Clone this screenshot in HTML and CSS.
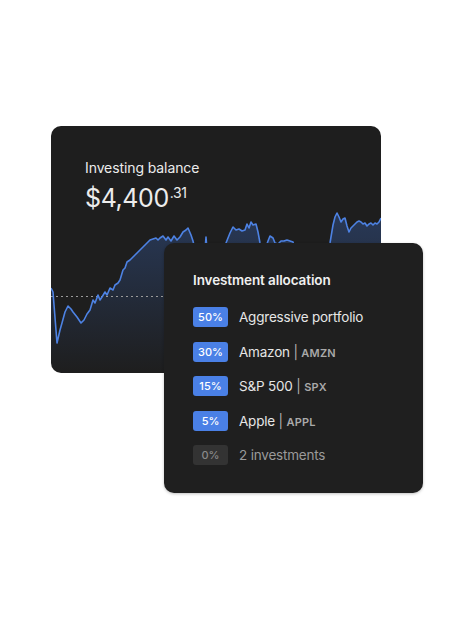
FILE: index.html
```html
<!DOCTYPE html>
<html>
<head>
<meta charset="utf-8">
<link rel="stylesheet" href="styles.css">
</head>
<body>
<div class="stage">
  <section class="balance-card">
    <svg class="chart" viewBox="51 126 330 247" preserveAspectRatio="none" width="330" height="247">
      <defs>
        <linearGradient id="fill" x1="0" y1="210" x2="0" y2="373" gradientUnits="userSpaceOnUse">
          <stop offset="0" stop-color="#3f74d6" stop-opacity="0.32"/>
          <stop offset="1" stop-color="#3f74d6" stop-opacity="0"/>
        </linearGradient>
      </defs>
      <polygon fill="url(#fill)" points="51,288 53,292 57,343 60,330 62,323 65,312 68,306 71,309 73,312 77,317 81,323 84,320 87,314 90,310 93,300 95,303 98,295 100,300 102,297 105,292 107,295 110,288 113,290 115,285 118,283 120,280 123,270 125,268 127,262 130,260 132,258 135,255 138,252 141,249 143,247 146,244 150,240 153,239 156,238 158,240 160,238 163,236 166,240 168,237 171,241 174,236 177,240 180,237 183,232 186,230 188,228 191,235 193,241 195,250 205,250 206,237 207,250 224,250 226,243 230,233 233,227 236,230 239,229 242,231 245,230 247,224 249,228 251,222 253,225 256,224 258,232 260,243 262,250 265,250 268,241 270,236 273,238 275,243 278,244 281,241 284,241 287,240 290,241 293,242 295,250 328,250 330,243 333,225 335,217 337,213 339,217 341,222 343,219 345,218 347,226 349,232 351,228 353,226 355,224 357,222 359,221 361,222 363,224 365,223 367,226 369,224 371,223 373,225 375,223 377,224 379,222 381,218 381,373 51,373"/>
      <line x1="51" y1="296.5" x2="381" y2="296.5" stroke="#9a9a9a" stroke-width="1" stroke-dasharray="2 3"/>
      <polyline fill="none" stroke="#4d82e3" stroke-width="1.6" stroke-linejoin="round" points="51,288 53,292 57,343 60,330 62,323 65,312 68,306 71,309 73,312 77,317 81,323 84,320 87,314 90,310 93,300 95,303 98,295 100,300 102,297 105,292 107,295 110,288 113,290 115,285 118,283 120,280 123,270 125,268 127,262 130,260 132,258 135,255 138,252 141,249 143,247 146,244 150,240 153,239 156,238 158,240 160,238 163,236 166,240 168,237 171,241 174,236 177,240 180,237 183,232 186,230 188,228 191,235 193,241 195,250 205,250 206,237 207,250 224,250 226,243 230,233 233,227 236,230 239,229 242,231 245,230 247,224 249,228 251,222 253,225 256,224 258,232 260,243 262,250 265,250 268,241 270,236 273,238 275,243 278,244 281,241 284,241 287,240 290,241 293,242 295,250 328,250 330,243 333,225 335,217 337,213 339,217 341,222 343,219 345,218 347,226 349,232 351,228 353,226 355,224 357,222 359,221 361,222 363,224 365,223 367,226 369,224 371,223 373,225 375,223 377,224 379,222 381,218"/>
    </svg>
    <div class="balance-head">
      <div class="balance-label">Investing balance</div>
      <div class="balance-amount">$4,400<span class="cents">.31</span></div>
    </div>
  </section>

  <section class="alloc-card">
    <h2 class="alloc-title">Investment allocation</h2>
    <ul class="alloc-list">
      <li class="alloc-row"><span class="badge">50%</span><span class="name">Aggressive portfolio</span></li>
      <li class="alloc-row"><span class="badge">30%</span><span class="name">Amazon <span class="sep">|</span> <span class="ticker">AMZN</span></span></li>
      <li class="alloc-row"><span class="badge">15%</span><span class="name">S&amp;P 500 <span class="sep">|</span> <span class="ticker">SPX</span></span></li>
      <li class="alloc-row"><span class="badge">5%</span><span class="name">Apple <span class="sep">|</span> <span class="ticker">APPL</span></span></li>
      <li class="alloc-row muted"><span class="badge">0%</span><span class="name">2 investments</span></li>
    </ul>
  </section>
</div>
</body>
</html>
```

FILE: styles.css
```css
* { box-sizing: border-box; }
html, body { margin: 0; padding: 0; background: #ffffff; }
body {
  font-family: Inter, "Noto Sans", "Liberation Sans", sans-serif;
  width: 474px;
  height: 620px;
  overflow: hidden;
}
.stage {
  position: relative;
  margin: 126px 0 0 51px;
  width: 372px;
  height: 367px;
}
.balance-card {
  position: relative;
  width: 330px;
  height: 247px;
  background: #1e1e1e;
  border-radius: 10px;
  overflow: hidden;
}
.chart {
  position: absolute;
  left: 0;
  top: 0;
  display: block;
}
.balance-head {
  position: relative;
  padding: 33px 0 0 34px;
  color: #ececec;
}
.balance-label {
  font-size: 14px;
  line-height: 17px;
  font-weight: 400;
  letter-spacing: -0.1px;
}
.balance-amount {
  margin-top: 2px;
  font-size: 25px;
  line-height: 30px;
  font-weight: 400;
  letter-spacing: -0.4px;
}
.cents {
  font-size: 14px;
  vertical-align: 9px;
  margin-left: 1px;
}
.alloc-card {
  position: absolute;
  left: 113px;
  top: 117px;
  width: 259px;
  height: 250px;
  background: #1f1f1f;
  border-radius: 10px;
  padding: 29px 0 0 29px;
  box-shadow: 0 1px 3px rgba(0,0,0,0.25);
}
.alloc-title {
  margin: 0;
  font-size: 13.5px;
  line-height: 16px;
  font-weight: 600;
  color: #f0f0f0;
  letter-spacing: -0.1px;
}
.alloc-list {
  list-style: none;
  margin: 19px 0 0 0;
  padding: 0;
  display: flex;
  flex-direction: column;
  gap: 14.5px;
}
.alloc-row {
  display: flex;
  align-items: center;
  gap: 11px;
  height: 20px;
}
.badge {
  width: 35px;
  height: 20px;
  border-radius: 3px;
  background: #4a80e6;
  color: #ffffff;
  font-size: 11px;
  font-weight: 500;
  display: flex;
  align-items: center;
  justify-content: center;
}
.name {
  font-size: 13.5px;
  color: #e6e6e6;
  letter-spacing: -0.2px;
  white-space: nowrap;
}
.sep { color: #b0b0b0; font-weight: 400; }
.ticker {
  font-size: 11px;
  font-weight: 600;
  color: #a9a9a9;
  letter-spacing: 0.2px;
}
.muted .badge { background: #333333; color: #8a8a8a; }
.muted .name { color: #9a9a9a; }
```
